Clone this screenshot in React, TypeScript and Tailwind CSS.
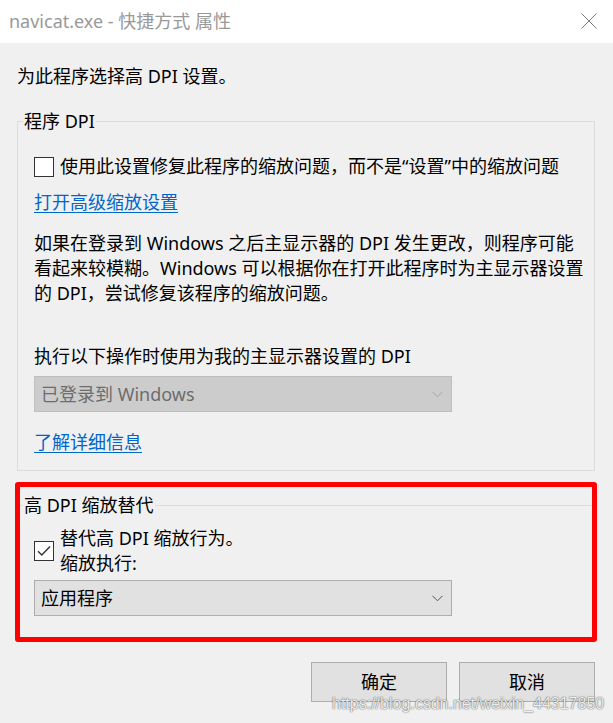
import React from "react";

const font = "font-['Noto_Sans','Noto_Sans_CJK_SC',sans-serif]";

const Chevron = ({ color }: { color: string }) => (
  <svg width="11" height="7" viewBox="0 0 11 7" fill="none">
    <path d="M0.5 0.8 L5.5 5.8 L10.5 0.8" stroke={color} strokeWidth="1" />
  </svg>
);

const Dropdown = ({ label, disabled }: { label: string; disabled?: boolean }) => (
  <div
    className={
      disabled
        ? "mt-[7px] flex h-[36px] w-[418px] items-center justify-between border border-[#bfbfbf] bg-[#cccccc] pl-[6px] pr-[8px] text-[#6d6d6d]"
        : "mt-[4px] flex h-[36px] w-[418px] items-center justify-between border border-[#adadad] bg-[#e1e1e1] pl-[6px] pr-[8px] text-black"
    }
  >
    <span>{label}</span>
    <Chevron color={disabled ? "#a6a6a6" : "#555555"} />
  </div>
);

const CheckBox = ({ checked }: { checked?: boolean }) => (
  <div className="flex h-[20px] w-[20px] shrink-0 items-center justify-center border border-[#333333] bg-white">
    {checked && (
      <svg width="14" height="12" viewBox="0 0 14 12" fill="none">
        <path d="M1 6.2 L4.8 10 L13 1.4" stroke="#333333" strokeWidth="1.4" />
      </svg>
    )}
  </div>
);

export default function App() {
  return (
    <div className={`relative h-[723px] w-[613px] overflow-hidden bg-[#f0f0f0] text-[18px] leading-[25px] text-black ${font}`}>
      {/* title bar */}
      <div className="flex h-[43px] items-center justify-between bg-white pb-[1px] pl-[9px] pr-[16px]">
        <span className="text-[#999999]">navicat.exe - 快捷方式 属性</span>
        <svg width="16" height="16" viewBox="0 0 16 16" fill="none">
          <path d="M0.5 0.5 L15.5 15.5 M15.5 0.5 L0.5 15.5" stroke="#7a7a7a" strokeWidth="1" />
        </svg>
      </div>

      <div className="pl-[17px] pr-[18px]">
        <p className="mt-[21px]">为此程序选择高 DPI 设置。</p>

        {/* 程序 DPI */}
        <fieldset className="mt-[20px] border border-[#dcdcdc]">
          <legend className="ml-[5px] px-[1px]">程序 DPI</legend>
          <div className="pb-[15px] pl-[16px] pt-[20px]">
            <div className="flex items-center gap-[6px]">
              <CheckBox />
              <span className="whitespace-nowrap">使用此设置修复此程序的缩放问题，而不是“设置”中的缩放问题</span>
            </div>
            <a className="mt-[11px] block w-fit text-[#0066cc] underline underline-offset-[3px]">打开高级缩放设置</a>
            <p className="mt-[16px] whitespace-nowrap">
              <span className="block">如果在登录到 Windows 之后主显示器的 DPI 发生更改，则程序可能</span>
              <span className="block">看起来较模糊。Windows 可以根据你在打开此程序时为主显示器设置</span>
              <span className="block">的 DPI，尝试修复该程序的缩放问题。</span>
            </p>
            <p className="mt-[38px]">执行以下操作时使用为我的主显示器设置的 DPI</p>
            <Dropdown label="已登录到 Windows" disabled />
            <a className="mt-[18px] block w-fit text-[#0066cc] underline underline-offset-[3px]">了解详细信息</a>
          </div>
        </fieldset>

        {/* 高 DPI 缩放替代 */}
        <fieldset className="mt-[22px] border border-[#dcdcdc]">
          <legend className="ml-[5px] px-[1px]">高 DPI 缩放替代</legend>
          <div className="pb-[21px] pl-[16px] pt-[8px]">
            <div className="flex items-center gap-[6px]">
              <CheckBox checked />
              <div>
                <p>替代高 DPI 缩放行为。</p>
                <p>缩放执行:</p>
              </div>
            </div>
            <Dropdown label="应用程序" />
          </div>
        </fieldset>

        <div className="mt-[24px] flex justify-end gap-[12px]">
          <button className="h-[40px] w-[136px] border border-[#adadad] bg-[#e1e1e1]">确定</button>
          <button className="h-[40px] w-[136px] border border-[#adadad] bg-[#e1e1e1]">取消</button>
        </div>
      </div>

      {/* red annotation frame */}
      <div className="pointer-events-none absolute left-[15px] top-[482px] h-[160px] w-[582px] rounded-[3px] border-[5px] border-[#ff0000]" />

      {/* watermark */}
      <div className="pointer-events-none absolute left-[332px] top-[694px] font-['Liberation_Sans',sans-serif] text-[16px] leading-[20px] text-white/90 [text-shadow:0_0_1px_rgba(0,0,0,0.7),0_0_2px_rgba(0,0,0,0.35)]">
        https://blog.csdn.net/weixin_44317850
      </div>
    </div>
  );
}
